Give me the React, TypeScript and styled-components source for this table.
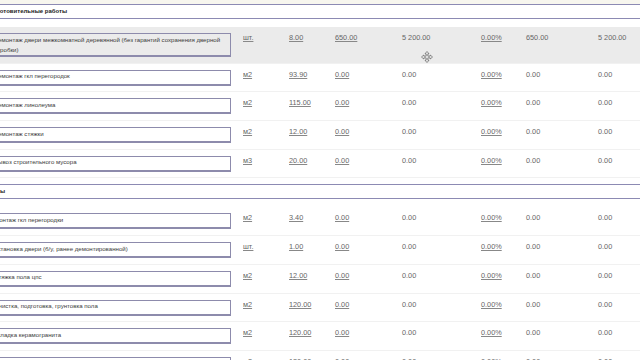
import React from 'react';
import styled, { createGlobalStyle } from 'styled-components';

interface IItem {
  name: string
  unit: string
  qty: string
  price: string
  sum: string
  discount: string
  clientPrice: string
  clientSum: string
  active?: boolean
}

interface ISection {
  title: string
  items: IItem[]
}

const zero = { price: '0.00', sum: '0.00', discount: '0.00%', clientPrice: '0.00', clientSum: '0.00' };

const sections: ISection[] = [
  {
    title: 'Подготовительные работы',
    items: [
      {
        name: 'Демонтаж двери межкомнатной деревянной (без гарантий сохранения дверной коробки)',
        unit: 'шт.', qty: '8.00', price: '650.00', sum: '5 200.00', discount: '0.00%',
        clientPrice: '650.00', clientSum: '5 200.00', active: true,
      },
      { name: 'Демонтаж гкл перегородок', unit: 'м2', qty: '93.90', ...zero },
      { name: 'Демонтаж линолеума', unit: 'м2', qty: '115.00', ...zero },
      { name: 'Демонтаж стяжки', unit: 'м2', qty: '12.00', ...zero },
      { name: 'Вывоз строительного мусора', unit: 'м3', qty: '20.00', ...zero },
    ],
  },
  {
    title: 'Стены',
    items: [
      { name: 'Монтаж гкл перегородки', unit: 'м2', qty: '3.40', ...zero },
      { name: 'Установка двери (б/у, ранее демонтированной)', unit: 'шт.', qty: '1.00', ...zero },
      { name: 'Стяжка пола цпс', unit: 'м2', qty: '12.00', ...zero },
      { name: 'Очистка, подготовка, грунтовка пола', unit: 'м2', qty: '120.00', ...zero },
      { name: 'Укладка керамогранита', unit: 'м2', qty: '120.00', ...zero },
      { name: 'Затирка швов', unit: 'м2', qty: '120.00', ...zero },
    ],
  },
];

const App: React.FC = () => {
  return (
    <>
      <GlobalStyle/>
      <Page>
        <TopStrip/>
        {sections.map((section) => (
          <section key={section.title}>
            <SectionTitle>{section.title}</SectionTitle>
            {section.items.map((item) => (
              <Row key={item.name} $active={item.active}>
                <NameBox>{item.name}</NameBox>
                <Cell $link>{item.unit}</Cell>
                <Cell $link>{item.qty}</Cell>
                <Cell $link>{item.price}</Cell>
                <Cell>{item.sum}</Cell>
                <Cell $link>{item.discount}</Cell>
                <Cell>{item.clientPrice}</Cell>
                <Cell>{item.clientSum}</Cell>
              </Row>
            ))}
          </section>
        ))}
        <MoveCursor width='12' height='12' viewBox='0 0 12 12'>
          <path
            d='M6 0.5 L8 2.8 L6.8 2.8 L6.8 5.2 L9.2 5.2 L9.2 4 L11.5 6 L9.2 8 L9.2 6.8 L6.8 6.8 L6.8 9.2 L8 9.2 L6 11.5 L4 9.2 L5.2 9.2 L5.2 6.8 L2.8 6.8 L2.8 8 L0.5 6 L2.8 4 L2.8 5.2 L5.2 5.2 L5.2 2.8 L4 2.8 Z'
            fill='#fff'
            stroke='#666'
            strokeWidth='0.8'
          />
        </MoveCursor>
      </Page>
    </>
  );
};

export default App;

const GlobalStyle = createGlobalStyle`
  html, body {
    margin: 0;
    padding: 0;
    width: 640px;
    height: 360px;
    overflow: hidden;
    background: #fff;
    font-family: "Liberation Sans", Arial, sans-serif;
  }
`;

// the table is scrolled a little to the right, so its left edge is out of view
const Page = styled.div`
  position: relative;
  width: 660px;
  margin-left: -12px;
`;

const TopStrip = styled.div`
  height: 4px;
  background: #f7f6ee;
`;

const SectionTitle = styled.h3`
  margin: 0 0 8px;
  height: 13px;
  border-top: 1px solid #8c8ab3;
  border-bottom: 1px solid #8c8ab3;
  text-indent: -2.3px;
  font-size: 6px;
  line-height: 13px;
  font-weight: 700;
  color: #222;
  white-space: nowrap;

  section + section & {
    margin-top: 6px;
  }
`;

const Row = styled.div<{ $active?: boolean }>`
  display: grid;
  grid-template-columns: 255px 46px 46px 67px 79px 45px 72px 1fr;
  align-items: start;
  padding: 6px 0 5.7px;
  border-bottom: 1px solid #f1f1f1;
  background: ${(p) => (p.$active ? '#ebebeb' : '#fff')};
`;

const NameBox = styled.div`
  width: 243px;
  box-sizing: border-box;
  min-height: 16px;
  padding: 0.5px 6px 0.5px 5px;
  border: 1px solid #8d8bac;
  border-bottom-width: 2px;
  font-size: 6.1px;
  line-height: 10px;
  color: #3a3a3a;
`;

const Cell = styled.div<{ $link?: boolean }>`
  padding-top: 1px;
  font-size: 7.3px;
  line-height: 8px;
  color: #666;
  white-space: nowrap;
  text-decoration: ${(p) => (p.$link ? 'underline' : 'none')};
  text-decoration-color: #888;
  text-underline-offset: 1px;
`;

const MoveCursor = styled.svg`
  position: absolute;
  left: 433px;
  top: 51px;
`;
